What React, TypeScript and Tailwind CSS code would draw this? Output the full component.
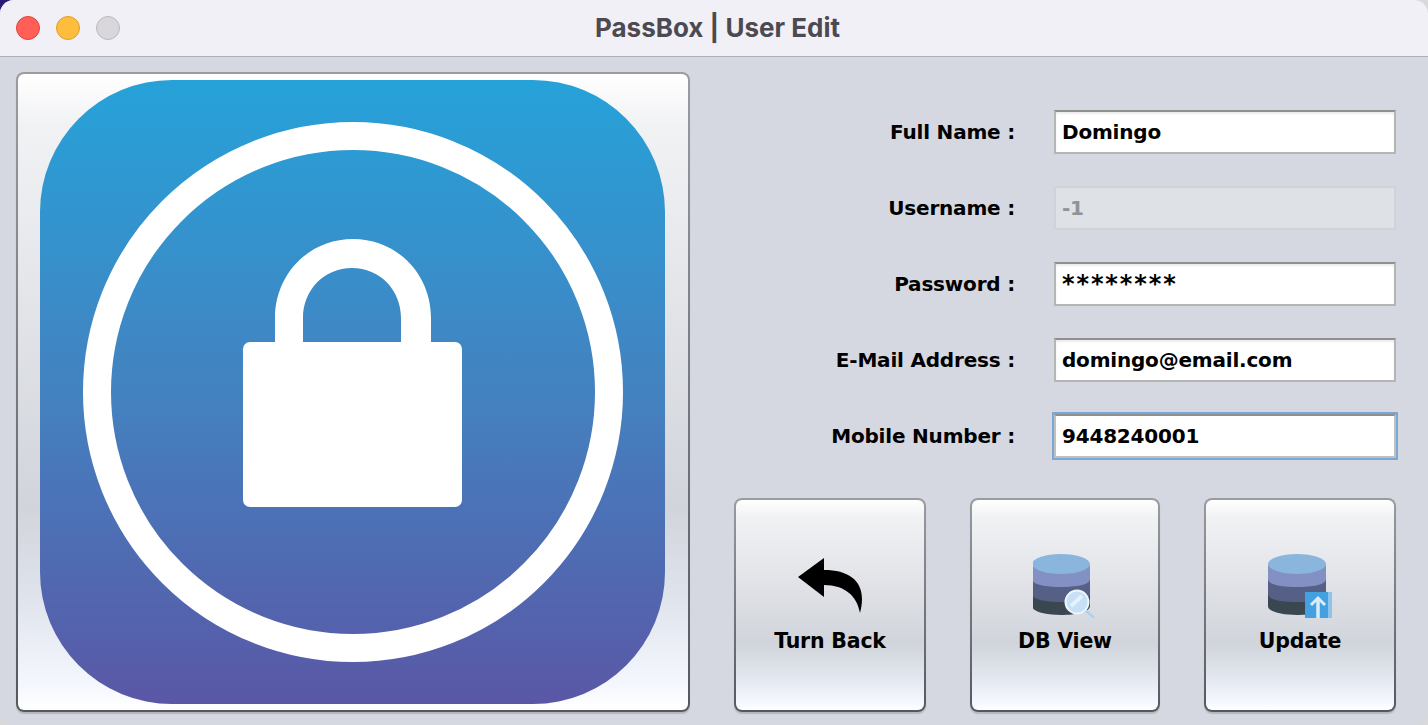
const fontClass = "font-['DejaVu_Sans',sans-serif] font-bold";

type FieldType = {
  label: string;
  value: string;
  disabled?: boolean;
  focused?: boolean;
  masked?: boolean;
};

const fields: FieldType[] = [
  { label: "Full Name :", value: "Domingo" },
  { label: "Username :", value: "-1", disabled: true },
  { label: "Password :", value: "********", masked: true },
  { label: "E-Mail Address :", value: "domingo@email.com" },
  { label: "Mobile Number :", value: "9448240001", focused: true },
];

const AppIcon = () => (
  <svg width="625" height="624" viewBox="0 0 625 624">
    <defs>
      <linearGradient id="iconBg" x1="0" y1="0" x2="0" y2="1">
        <stop offset="0" stopColor="#26a2d9" />
        <stop offset="0.5" stopColor="#4382c0" />
        <stop offset="1" stopColor="#5a57a6" />
      </linearGradient>
    </defs>
    <path
      d="M132 0H493A132 132 0 0 1 625 132V492A132 132 0 0 1 493 624H132A132 132 0 0 1 0 492V132A132 132 0 0 1 132 0Z"
      fill="url(#iconBg)"
    />
    <circle cx="313" cy="312" r="256" fill="none" stroke="#fff" strokeWidth="28" />
    <path
      d="M235 262V238C235 194 269 159 313 159C357 159 391 194 391 238V262H361V238C361 210 340 188 312 188C284 188 263 210 263 238V262Z"
      fill="#fff"
    />
    <rect x="203" y="262" width="219" height="165" rx="7" fill="#fff" />
  </svg>
);

const BackIcon = () => (
  <svg width="64" height="64" viewBox="0 0 64 64">
    <path
      d="M0 23L26 4V16C50 16 64 26 64 45C64 50 63 55 62 59C59 42 47 31 26 31V43Z"
      fill="#000"
    />
  </svg>
);

const DbStack = () => (
  <>
    <path d="M0 10H58V52C58 58 44 61 29 61C14 61 0 58 0 52Z" fill="#3a4650" />
    <path d="M0 10H58V40C58 46 44 48 29 48C14 48 0 46 0 40Z" fill="#565f85" />
    <path d="M0 10H58V25C58 31 44 33 29 33C14 33 0 31 0 25Z" fill="#8390c4" />
    <ellipse cx="29" cy="10" rx="29" ry="10" fill="#8ab5dd" />
  </>
);

const DbViewIcon = () => (
  <svg width="64" height="64" viewBox="1 0 64 64">
    <DbStack />
    <path d="M52 55L62 64" stroke="#a9d3f2" strokeWidth="2.5" />
    <circle cx="45" cy="48" r="11.5" fill="#c5e0f7" stroke="#eef6fd" strokeWidth="2" />
    <path d="M39 52L50 42" stroke="#e4f2fc" strokeWidth="4" />
  </svg>
);

const UpdateIcon = () => (
  <svg width="64" height="64" viewBox="0 0 64 64">
    <DbStack />
    <rect x="37" y="38" width="27" height="26" fill="#44a0df" />
    <rect x="60" y="38" width="4" height="26" fill="#8cc4ec" />
    <path d="M43 51L50 44L57 51" fill="none" stroke="#d8ecfa" strokeWidth="3" />
    <path d="M50 45V64" stroke="#d8ecfa" strokeWidth="3.5" />
  </svg>
);

const AquaPanel = ({ className, children }: { className: string; children: React.ReactNode }) => (
  <div
    className={`rounded-lg bg-gradient-to-b from-[#999ca1] to-[#55585e] p-[2px] shadow-[0_2px_1px_rgba(0,0,0,0.15)] ${className}`}
  >
    <div className="h-full w-full rounded-md bg-[linear-gradient(to_bottom,#ffffff_0%,#f1f2f4_8%,#e3e5e9_35%,#d1d4db_68%,#dfe3eb_82%,#f4f7fe_96%,#ffffff_100%)]">
      {children}
    </div>
  </div>
);

const ActionButton = ({
  className,
  icon,
  label,
}: {
  className: string;
  icon: React.ReactNode;
  label: string;
}) => (
  <AquaPanel className={`h-[214px] ${className}`}>
    <button className="flex h-full w-full flex-col items-center pt-[54px]">
      {icon}
      <span className={`mt-[10px] text-[20.5px] leading-[26px] tracking-[-0.2px] text-black ${fontClass}`}>
        {label}
      </span>
    </button>
  </AquaPanel>
);

const inputClass = (field: FieldType) => {
  if (field.disabled) {
    return "border-[#d0d3d9] bg-[#dee1e6] text-[20px] tracking-[-0.2px] text-[#8f9398] opacity-100";
  }
  if (field.focused) {
    return "border-t-[#8f8f8f] border-x-[#c0c0c0] border-b-[#c0c0c0] bg-white text-[20px] tracking-[-0.2px] text-black shadow-[0_0_0_2px_#7aa7d4]";
  }
  if (field.masked) {
    return "border-t-[#8f8f8f] border-x-[#b5b5b5] border-b-[#b5b5b5] bg-white text-[24px] tracking-[1.9px] text-black shadow-[inset_0_2px_2px_rgba(0,0,0,0.08)]";
  }
  return "border-t-[#8f8f8f] border-x-[#b5b5b5] border-b-[#b5b5b5] bg-white text-[20px] tracking-[-0.2px] text-black shadow-[inset_0_2px_2px_rgba(0,0,0,0.08)]";
};

const App = () => {
  return (
    <div className="h-[725px] w-[1428px] overflow-hidden bg-[linear-gradient(to_bottom_right,#2a1a78_2%,#d9d9dc_2%)]">
      <div className="flex h-full w-full flex-col overflow-hidden rounded-t-[14px] rounded-b-[12px] bg-[#d5d8e0]">
        <header className="flex h-[57px] shrink-0 items-center border-b border-[#b1b1b5] bg-[#f2f0f7] px-4">
          <span className="h-6 w-6 rounded-full border border-[#e0443e] bg-[#ff5f57]" />
          <span className="ml-4 h-6 w-6 rounded-full border border-[#dea123] bg-[#ffbd3e]" />
          <span className="ml-4 h-6 w-6 rounded-full border border-[#bcb9bf] bg-[#d9d6dc]" />
          <h1 className="ml-[475px] font-['Inter',sans-serif] text-[26px] font-bold leading-none text-[#4c4a50]">
            PassBox | User Edit
          </h1>
        </header>

        <div className="flex pl-4 pt-[15px]">
          <AquaPanel className="h-[640px] w-[674px]">
            <div className="flex h-full items-center justify-center pr-[2px]">
              <AppIcon />
            </div>
          </AquaPanel>

          <div className="ml-[44px] w-[662px] pt-[38px]">
            <div className="flex flex-col gap-8">
              {fields.map((field) => (
                <div key={field.label} className="flex h-11 items-center gap-[39px]">
                  <label className={`w-[281px] text-right text-[20px] tracking-[-0.2px] text-black ${fontClass}`}>
                    {field.label}
                  </label>
                  <input
                    readOnly
                    disabled={field.disabled}
                    value={field.value}
                    className={`h-11 w-[342px] border-2 px-[6px] outline-none ${fontClass} ${inputClass(field)}`}
                  />
                </div>
              ))}
            </div>

            <div className="mt-10 flex gap-11">
              <ActionButton className="w-[192px]" icon={<BackIcon />} label="Turn Back" />
              <ActionButton className="w-[190px]" icon={<DbViewIcon />} label="DB View" />
              <ActionButton className="w-[192px]" icon={<UpdateIcon />} label="Update" />
            </div>
          </div>
        </div>
      </div>
    </div>
  );
};

export default App;
